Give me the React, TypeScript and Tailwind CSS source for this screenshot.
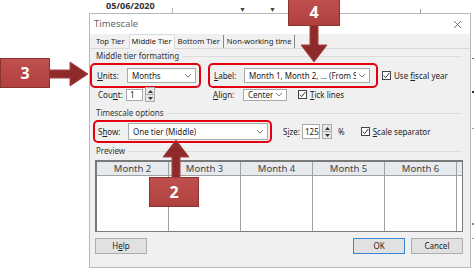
import React from 'react';

const font = { fontFamily: '"Noto Sans", "Open Sans", sans-serif' };

function U({ children }: { children: React.ReactNode }) {
  return <span className="underline underline-offset-[1px]">{children}</span>;
}

function Chevron() {
  return (
    <svg width="8" height="5" viewBox="0 0 8 5" className="shrink-0">
      <path d="M1 1 L4 4 L7 1" fill="none" stroke="#707070" strokeWidth="0.9" />
    </svg>
  );
}

function Combo({ text, w, h = 15 }: { text: string; w: number; h?: number }) {
  return (
    <div
      className="flex items-center justify-between gap-[2px] border border-[#a9a9a9] bg-white pl-[4px] pr-[3px] overflow-hidden"
      style={{ width: w, height: h }}
    >
      <span className="whitespace-nowrap overflow-hidden leading-[11px] text-[#222]">{text}</span>
      <Chevron />
    </div>
  );
}

function Check({ children }: { children: React.ReactNode }) {
  return (
    <div className="flex items-center gap-[3px] whitespace-nowrap">
      <div className="flex h-[9px] w-[9px] items-center justify-center border border-[#444] bg-white">
        <svg width="7" height="7" viewBox="0 0 7 7">
          <path d="M0.8 3.6 L2.7 5.6 L6.3 1" fill="none" stroke="#222" strokeWidth="0.9" />
        </svg>
      </div>
      <span>{children}</span>
    </div>
  );
}

function Spinner() {
  return (
    <div className="ml-[2px] flex h-[15px] w-[10px] flex-col border border-[#a9a9a9] bg-[#e8e8e8]">
      <div className="flex flex-1 items-center justify-center border-b border-[#a9a9a9]">
        <svg width="5" height="3" viewBox="0 0 5 3"><path d="M0 3 L2.5 0 L5 3Z" fill="#333" /></svg>
      </div>
      <div className="flex flex-1 items-center justify-center">
        <svg width="5" height="3" viewBox="0 0 5 3"><path d="M0 0 L2.5 3 L5 0Z" fill="#333" /></svg>
      </div>
    </div>
  );
}

function GroupLabel({ text }: { text: string }) {
  return (
    <div className="flex items-center gap-[3px] pl-[6px] pr-[8px] text-[#333]">
      <span className="whitespace-nowrap">{text}</span>
      <div className="h-px flex-1 bg-[#dcdcdc]" />
    </div>
  );
}

function NumBox({ n }: { n: string }) {
  return (
    <div className="flex h-full w-full items-center justify-center border border-[#8c3230] bg-gradient-to-b from-[#c0504d] to-[#b0413e] text-[16px] font-bold text-white">
      {n}
    </div>
  );
}

const months = ['Month 2', 'Month 3', 'Month 4', 'Month 5', 'Month 6'];

export default function App() {
  return (
    <div className="relative h-[268px] w-[474px] overflow-hidden bg-white text-[8px] leading-none text-[#222]" style={font}>
      {/* app behind the dialog */}
      <div className="relative h-[13px] overflow-hidden">
        <span className="absolute left-[106px] top-[0px] text-[9px] font-bold leading-[11px] text-[#333]">05/06/2020</span>
        <span className="absolute left-[239px] top-[6px] text-[7px] text-[#444]">▼</span>
        <span className="absolute left-[269px] top-[6px] text-[7px] text-[#444]">▼</span>
        <div className="absolute left-[172px] top-[8px] h-[5px] w-px bg-[#bbb]" />
        <div className="absolute left-[420px] top-[9px] h-[4px] w-px bg-[#999]" />
      </div>

      <div className="flex h-[255px]">
        <div className="w-[89px] shrink-0" />
        <div className="flex w-[382px] shrink-0 flex-col border border-[#b8b8b8] bg-[#f0f0f0]">
          {/* title bar */}
          <div className="flex h-[20px] items-center justify-between bg-white pl-[4px] pr-[8px]">
            <span className="text-[9.5px] text-[#666]">Timescale</span>
            <svg width="9" height="9" viewBox="0 0 9 9">
              <path d="M1 1 L8 8 M8 1 L1 8" stroke="#666" strokeWidth="0.9" />
            </svg>
          </div>
          {/* tabs */}
          <div className="flex h-[15px] items-end border-b border-[#d9d9d9] pl-[5px] text-[7.6px]">
            <div className="flex h-[13px] items-center pl-[1px] pr-[4px]">Top Tier</div>
            <div className="-mb-px flex h-[15px] items-center border-x border-t border-[#d9d9d9] bg-[#f9f9f9] px-[2px]">Middle Tier</div>
            <div className="flex h-[13px] items-center border-r border-[#888] px-[3px]">Bottom Tier</div>
            <div className="flex h-[13px] items-center border-r border-[#888] px-[3px]">Non-working time</div>
          </div>

          <div className="mt-[3px]">
            <GroupLabel text="Middle tier formatting" />
          </div>

          {/* units / label row */}
          <div className="mt-[3px] flex items-center">
            <div className="flex h-[25px] w-[111px] items-center rounded-[5px] border-[2.5px] border-[#e3000f] pl-[5px]">
              <span className="w-[30px]"><U>U</U>nits:</span>
              <Combo text="Months" w={69} />
            </div>
            <div className="ml-[7px] flex h-[25px] w-[170px] items-center rounded-[5px] border-[2.5px] border-[#e3000f] pl-[4px]">
              <span className="w-[30px]"><U>L</U>abel:</span>
              <Combo text="Month 1, Month 2, ... (From Start)" w={126} />
            </div>
            <div className="ml-[4px]">
              <Check>Use <U>f</U>iscal year</Check>
            </div>
          </div>

          {/* count / align row */}
          <div className="mt-[-1px] flex h-[15px] items-center">
            <span className="ml-[8px] w-[28px]">Cou<U>n</U>t:</span>
            <div className="flex h-[12px] w-[17px] items-center border border-[#a9a9a9] bg-white pl-[3px]">1</div>
            <Spinner />
            <span className="ml-[58px] w-[30px]"><U>A</U>lign:</span>
            <Combo text="Center" w={44} h={12} />
            <div className="ml-[11px]">
              <Check><U>T</U>ick lines</Check>
            </div>
          </div>

          <div className="mt-[7px]">
            <GroupLabel text="Timescale options" />
          </div>

          {/* show row */}
          <div className="mt-[3px] flex items-center">
            <div className="ml-[3px] flex h-[23px] w-[179px] items-center rounded-[5px] border-[2.5px] border-[#e3000f] pl-[3px]">
              <span className="w-[30px]">S<U>h</U>ow:</span>
              <Combo text="One tier (Middle)" w={140} h={17} />
            </div>
            <span className="ml-[11px] w-[19px]">S<U>i</U>ze:</span>
            <div className="flex h-[15px] w-[18px] items-center border border-[#a9a9a9] bg-white pl-[2px]">125</div>
            <Spinner />
            <span className="ml-[6px]">%</span>
            <div className="ml-[16px]">
              <Check><U>S</U>cale separator</Check>
            </div>
          </div>

          <div className="mt-[4px]">
            <GroupLabel text="Preview" />
          </div>

          {/* preview */}
          <div className="ml-[5px] mr-[7px] mt-[5px] flex h-[72px] border-l-2 border-t-2 border-b border-r border-[#7a7a7a] bg-white">
            {months.map((m) => (
              <div key={m} className="flex w-[72px] flex-col border-r border-[#a0a0a0]">
                <div className="flex h-[14px] items-center justify-center border-b border-[#a0a0a0] bg-[#e6e9ed] text-[9.5px] text-[#444]">
                  {m}
                </div>
              </div>
            ))}
            <div className="flex flex-1 flex-col">
              <div className="h-[14px] border-b border-[#a0a0a0] bg-[#e6e9ed]" />
            </div>
          </div>

          {/* buttons */}
          <div className="mt-[6px] flex items-center pl-[5px] pr-[7px]">
            <div className="flex h-[16px] w-[52px] items-center justify-center border border-[#adadad] bg-[#e1e1e1]">H<U>e</U>lp</div>
            <div className="ml-auto flex h-[16px] w-[52px] items-center justify-center border-[1.5px] border-[#3b86d4] bg-[#e1e1e1]">OK</div>
            <div className="ml-[6px] flex h-[16px] w-[52px] items-center justify-center border border-[#adadad] bg-[#e1e1e1]">Cancel</div>
          </div>
        </div>
        <div className="relative flex-1">
          <div className="absolute left-[1px] top-[45px] h-px w-[2px] bg-[#777]" />
          <div className="absolute left-[1px] top-[78px] h-[2px] w-[2px] bg-[#333]" />
          <div className="absolute left-[1px] top-[115px] h-px w-[2px] bg-[#999]" />
          <div className="absolute left-[1px] top-[210px] h-[2px] w-[2px] bg-[#7b7be0]" />
          <div className="absolute left-[1px] top-[225px] h-px w-[2px] bg-[#999]" />
        </div>
      </div>

      {/* annotations */}
      <div className="absolute left-0 top-[58px] h-[30px] w-[50px]"><NumBox n="3" /></div>
      <svg className="absolute left-[48px] top-[60px]" width="42" height="28" viewBox="0 0 42 28">
        <path d="M1 10 L22 10 L22 2 L40 14 L22 26 L22 18 L1 18 Z" fill="#8e2a2a" stroke="#a64443" strokeWidth="1" strokeLinejoin="round" />
      </svg>

      <div className="absolute left-[288px] top-[-2px] h-[28px] w-[52px]"><NumBox n="4" /></div>
      <svg className="absolute left-[299px] top-[25px]" width="30" height="39" viewBox="0 0 30 39">
        <path d="M11 0 L19 0 L19 20 L28 20 L15 37 L2 20 L11 20 Z" fill="#8e2a2a" stroke="#a64443" strokeWidth="1" strokeLinejoin="round" />
      </svg>

      <div className="absolute left-[149px] top-[177px] h-[30px] w-[50px]"><NumBox n="2" /></div>
      <svg className="absolute left-[161px] top-[138px]" width="30" height="40" viewBox="0 0 30 40">
        <path d="M11 40 L19 40 L19 19 L28 19 L15 2 L2 19 L11 19 Z" fill="#8e2a2a" stroke="#a64443" strokeWidth="1" strokeLinejoin="round" />
      </svg>
    </div>
  );
}
